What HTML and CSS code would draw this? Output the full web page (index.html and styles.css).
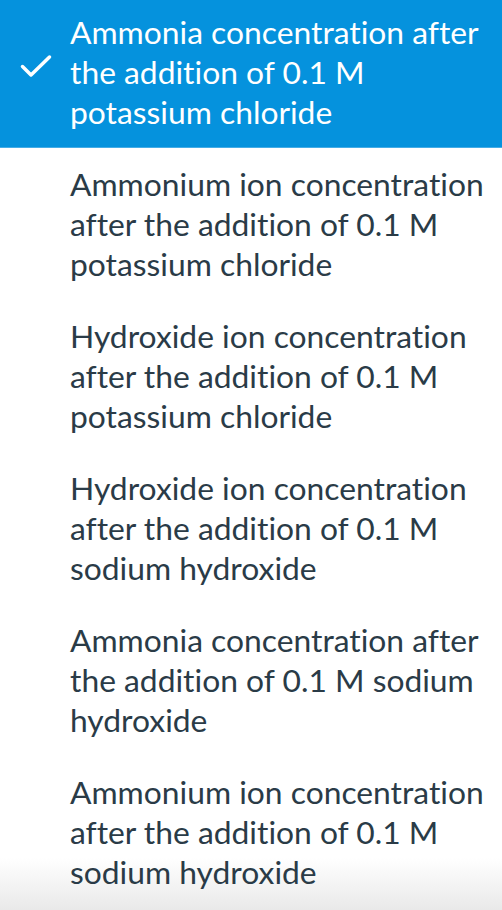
FILE: index.html
```html
<!DOCTYPE html>
<html>
<head>
  <title>Select an answer</title>
  <link rel="stylesheet" href="styles.css">
</head>
<body>
  <ul class="options">
    <li class="option selected">
      <svg class="check" width="32" height="26" viewBox="0 0 32 26">
        <path d="M2.5 12.5 L11 21 L29.5 3" fill="none" stroke="#fff" stroke-width="3.5" stroke-linecap="round" stroke-linejoin="round"/>
      </svg>
      <span class="label">Ammonia concentration after the addition of 0.1 M potassium chloride</span>
    </li>
    <li class="option"><span class="label">Ammonium ion concentration after the addition of 0.1 M potassium chloride</span></li>
    <li class="option"><span class="label">Hydroxide ion concentration after the addition of 0.1 M potassium chloride</span></li>
    <li class="option"><span class="label">Hydroxide ion concentration after the addition of 0.1 M sodium hydroxide</span></li>
    <li class="option"><span class="label">Ammonia concentration after the addition of 0.1 M sodium hydroxide</span></li>
    <li class="option"><span class="label">Ammonium ion concentration after the addition of 0.1 M sodium hydroxide</span></li>
  </ul>
</body>
</html>
```
FILE: styles.css
```css
html, body {
  height: 100%;
}

body {
  margin: 0;
  /* soft shade at the bottom edge of the scroll area */
  background: linear-gradient(to bottom, #fff calc(100% - 52px), #e9e9e9 100%);
  font-family: Lato, "Open Sans", sans-serif;
  font-variant-ligatures: none;
  color: #2a3b47;
  overflow: hidden;
}

.options {
  list-style: none;
  margin: -4px 0 0 0;
  padding: 0;
}

.option {
  display: flex;
  align-items: center;
  padding: 16px 10px 16px 70px;
  font-size: 31.8px;
  line-height: 40px;
  position: relative;
}

.option.selected {
  background-color: #0592dd;
  color: #fff;
  box-shadow: inset 0 -1px 0 #45ace6;
}

.check {
  position: absolute;
  left: 20px;
  top: 58px;
}
```
